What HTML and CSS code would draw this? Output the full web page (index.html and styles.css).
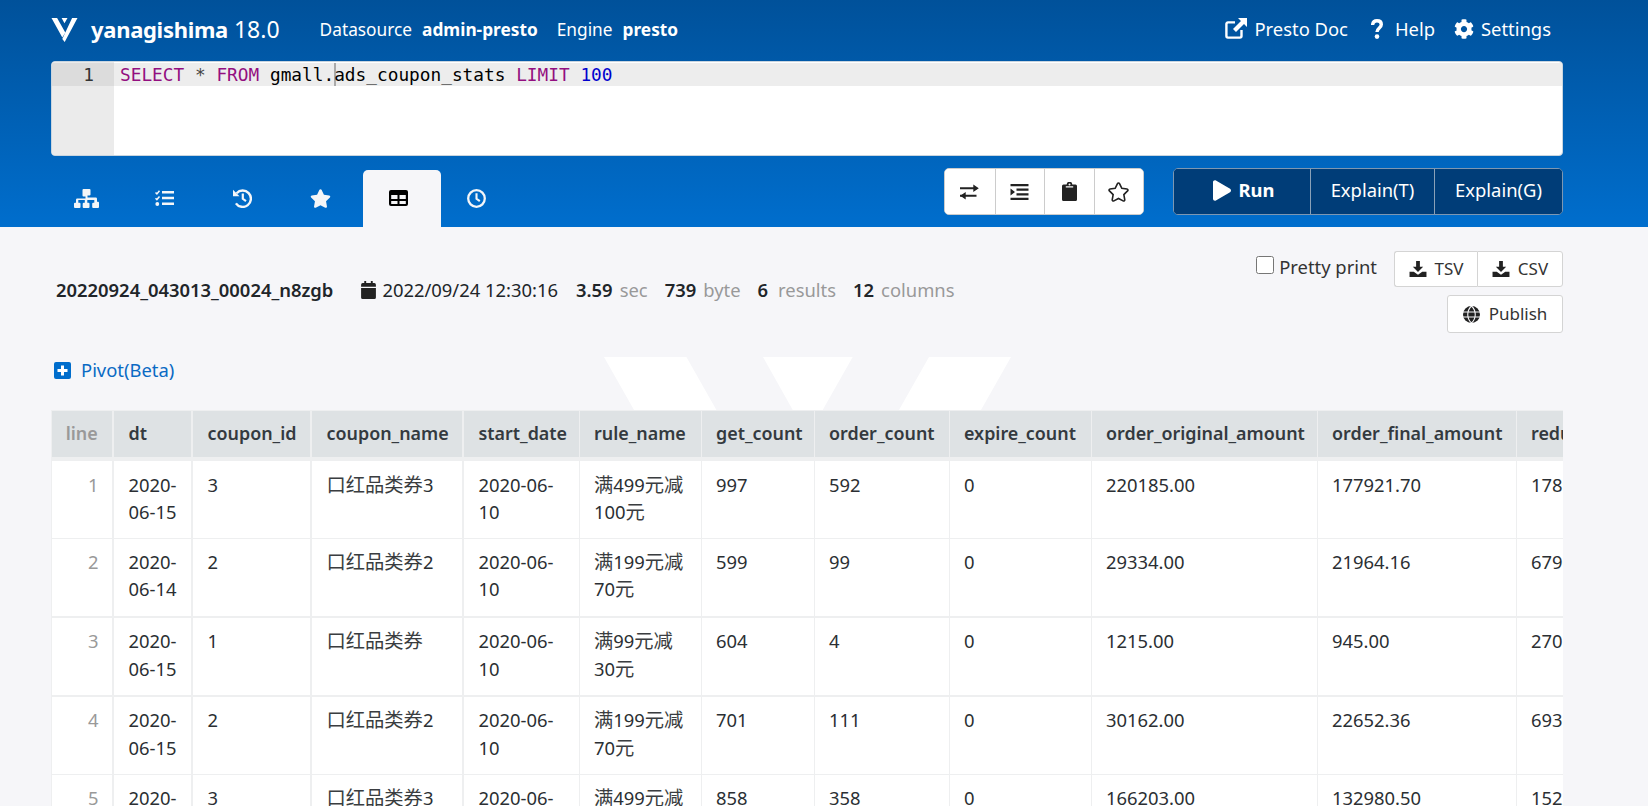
FILE: index.html
```html
<!DOCTYPE html>
<html lang="en">
<head>
<meta charset="utf-8">
<title>yanagishima</title>
<link rel="stylesheet" href="styles.css">
</head>
<body>
<header class="header">
  <nav class="nav">
    <div class="nav-left">
      <svg class="logo" viewBox="0 0 26 24"><path fill="#fff" d="M0 0h5.600L13.800 14.500 10.800 19.500zM10.100 0h5.900L13 5.200zM20.600 0H26L13.200 24 10.800 21z"/></svg>
      <span class="brand">yanagishima</span>
      <span class="version">18.0</span>
      <span class="nav-label">Datasource</span><strong class="nav-value">admin-presto</strong>
      <span class="nav-label eng">Engine</span><strong class="nav-value">presto</strong>
    </div>
    <div class="nav-right">
      <a class="nav-link"><svg class="ic-ext" viewBox="0 0 22 21"><path fill="none" stroke="#fff" stroke-width="2.4" d="M16.5 12v6a1.6 1.6 0 0 1-1.6 1.6H3A1.6 1.6 0 0 1 1.4 18V6A1.6 1.6 0 0 1 3 4.4h7"/><path fill="#fff" d="M13 0h9v9l-3-3-8 8-3-3 8-8z"/></svg>Presto Doc</a>
      <a class="nav-link nav-link-help"><svg class="ic-q" viewBox="0 0 12 20"><path fill="none" stroke="#fff" stroke-width="3.4" d="M1.6 6C1.8 3.2 3.6 1.8 6 1.8c2.600 0 4.300 1.500 4.300 3.700 0 3.500-4.300 3.400-4.300 7.500"/><circle cx="6" cy="17.600" r="2.300" fill="#fff"/></svg>Help</a>
      <a class="nav-link nav-link-tight"><svg class="ic-cog" viewBox="0 0 512 512"><path fill="#fff" d="M487.4 315.7l-42.6-24.6c4.3-23.2 4.3-47 0-70.2l42.6-24.6c4.9-2.8 7.1-8.6 5.5-14-11.1-35.6-30-67.8-54.7-94.6-3.8-4.1-10-5.1-14.8-2.3L380.8 110c-17.9-15.4-38.5-27.3-60.8-35.1V25.8c0-5.6-3.9-10.5-9.4-11.7-36.7-8.2-74.3-7.8-109.2 0-5.5 1.2-9.4 6.1-9.4 11.7V75c-22.2 7.9-42.8 19.8-60.8 35.1L88.7 85.5c-4.9-2.8-11-1.9-14.8 2.3-24.7 26.7-43.6 58.9-54.7 94.6-1.7 5.4.6 11.2 5.5 14L67.3 221c-4.3 23.2-4.3 47 0 70.2l-42.6 24.6c-4.9 2.8-7.1 8.6-5.5 14 11.1 35.6 30 67.8 54.7 94.6 3.8 4.1 10 5.1 14.8 2.3l42.6-24.6c17.9 15.4 38.5 27.3 60.8 35.1v49.2c0 5.6 3.9 10.5 9.4 11.7 36.7 8.2 74.3 7.8 109.2 0 5.5-1.2 9.4-6.1 9.4-11.7v-49.2c22.2-7.9 42.8-19.8 60.8-35.1l42.6 24.6c4.9 2.8 11 1.9 14.8-2.3 24.7-26.7 43.6-58.9 54.7-94.6 1.5-5.5-.7-11.3-5.6-14.1zM256 336c-44.1 0-80-35.9-80-80s35.9-80 80-80 80 35.9 80 80-35.9 80-80 80z"/></svg>Settings</a>
    </div>
  </nav>
  <div class="editor">
    <div class="gutter"><div class="gutter-active">1</div></div>
    <div class="code">
      <div class="code-line"><span class="kw">SELECT</span> <span class="op">*</span> <span class="kw">FROM</span> gmall.<span class="cursor"></span>ads_coupon_stats <span class="kw">LIMIT</span> <span class="num">100</span></div>
    </div>
  </div>
  <div class="toolbar">
    <div class="tabs">
      <a class="tab"><svg class="ic-sitemap" viewBox="0 0 25 19"><path fill="#f4f6f8" d="M9.500 0h6a1 1 0 0 1 1 1v4.500a1 1 0 0 1-1 1h-2v2h8.200a1.300 1.300 0 0 1 1.300 1.300v3h1a1 1 0 0 1 1 1V18a1 1 0 0 1-1 1h-4.800a1 1 0 0 1-1-1v-3.200a1 1 0 0 1 1-1h1.100v-2.700h-7v2.700h1.200a1 1 0 0 1 1 1V18a1 1 0 0 1-1 1h-4.800a1 1 0 0 1-1-1v-3.200a1 1 0 0 1 1-1h1.100v-2.700H4.300v2.700h1.200a1 1 0 0 1 1 1V18a1 1 0 0 1-1 1H1a1 1 0 0 1-1-1v-3.200a1 1 0 0 1 1-1h1v-3a1.300 1.300 0 0 1 1.300-1.300h8.200v-2h-2a1 1 0 0 1-1-1V1a1 1 0 0 1 1-1z"/></svg></a>
      <a class="tab"><svg class="ic-tasks" viewBox="0 0 19 16"><path fill="none" stroke="#f4f6f8" stroke-width="1.500" d="M.5 2.500l1.400 1.400L4.500.8M.5 8.200l1.400 1.400 2.600-3.100"/><circle cx="2.300" cy="14" r="1.900" fill="#f4f6f8"/><path fill="none" stroke="#f4f6f8" stroke-width="2.600" d="M7 2.200h12M7 8h12M7 13.800h12"/></svg></a>
      <a class="tab"><svg class="ic-round" viewBox="0 0 19 19"><path fill="none" stroke="#f4f6f8" stroke-width="2.400" d="M3.600 4.200A8.200 8.200 0 1 1 2.900 14.300"/><path fill="#f4f6f8" d="M0 .8l6.500 6.500H0z"/><path fill="none" stroke="#f4f6f8" stroke-width="2.200" d="M9.800 4.600v5.200l3.200 2.300"/></svg></a>
      <a class="tab"><svg class="ic-star" viewBox="0 0 576 512"><path fill="#f4f6f8" d="M259.3 17.800L194 150.200 47.900 171.500c-26.200 3.800-36.700 36.100-17.700 54.600l105.700 103-25 145.500c-4.500 26.300 23.200 46 46.400 33.700L288 439.600l130.700 68.700c23.200 12.200 50.900-7.400 46.400-33.700l-25-145.500 105.700-103c19-18.500 8.500-50.800-17.700-54.600L382 150.200 316.700 17.800c-11.700-23.600-45.600-23.900-57.400 0z"/></svg></a>
      <a class="tab tab-active"><svg class="ic-table" viewBox="0 0 19 16"><rect width="19" height="16" rx="2" fill="#000"/><path fill="#f6f6f8" d="M2.200 5h6.300v4H2.200zM10.500 5h6.300v4h-6.300zM2.200 11h6.300v3H2.200zM10.500 11h6.300v3h-6.300z"/></svg></a>
      <a class="tab"><svg class="ic-round" viewBox="0 0 19 19"><circle cx="9.500" cy="9.500" r="8.300" fill="none" stroke="#f4f6f8" stroke-width="2.300"/><path fill="none" stroke="#f4f6f8" stroke-width="2.100" d="M9.500 4.300v5.500l3.300 2.400"/></svg></a>
    </div>
    <div class="actions">
      <div class="tool-group">
        <button class="tool"><svg class="ic-tool" viewBox="0 0 19 16"><path fill="none" stroke="#222" stroke-width="2" d="M0 4.300h16.500M0 11.700h16.500"/><path fill="#222" d="M13.300.5L18.800 4.300l-5.500 3.800zM5.700 7.900L.2 11.700l5.500 3.800z"/></svg></button>
        <button class="tool"><svg class="ic-tool" viewBox="0 0 18 16"><path fill="#222" d="M0 0h18v2.300H0zM6 4.500h12v2.200H6zM6 9.200h12v2.200H6zM0 13.700h18V16H0zM0 4.500l4.500 3.500L0 11.500z"/></svg></button>
        <button class="tool"><svg class="ic-clip" viewBox="0 0 15 19"><path fill="#222" d="M1.500 2.500H4.700a2.800 2.800 0 0 1 5.600 0h3.200a1.500 1.500 0 0 1 1.500 1.500v13.500a1.500 1.500 0 0 1-1.500 1.500h-12A1.500 1.500 0 0 1 0 17.500V4a1.500 1.500 0 0 1 1.500-1.500z"/><path fill="#fff" d="M3.800 4.300h7.400v1.300H3.800z"/><circle cx="7.500" cy="2.400" r="1" fill="#fff"/></svg></button>
        <button class="tool"><svg class="ic-star-o" viewBox="-10 -10 596 532"><path fill="none" stroke="#222" stroke-width="46" d="M259.3 17.800L194 150.200 47.900 171.500c-26.200 3.800-36.700 36.100-17.700 54.600l105.700 103-25 145.500c-4.500 26.300 23.200 46 46.400 33.700L288 439.600l130.700 68.700c23.200 12.200 50.900-7.400 46.400-33.700l-25-145.500 105.700-103c19-18.500 8.500-50.800-17.700-54.600L382 150.200 316.700 17.800c-11.700-23.600-45.600-23.900-57.400 0z"/></svg></button>
      </div>
      <div class="run-group">
        <button class="run run-main"><svg class="ic-play" viewBox="0 0 448 512"><path fill="#fff" d="M424.400 214.700L72.400 6.600C43.800-10.300 0 6.100 0 47.900V464c0 37.500 40.700 60.100 72.400 41.300l352-208c31.400-18.500 31.500-64.100 0-82.600z"/></svg>Run</button>
        <button class="run run-t">Explain(T)</button>
        <button class="run run-g">Explain(G)</button>
      </div>
    </div>
  </div>
</header>
<main class="main">
  <svg class="watermark" viewBox="0 0 420 60"><path fill="#fff" d="M0 0h82.400l34 60H34zM159 0h89.700l-34 60h-22zM325 0h82l-34 60h-82z"/></svg>
  <section class="meta">
    <div class="meta-left">
      <strong class="query-id">20220924_043013_00024_n8zgb</strong>
      <svg class="ic-cal" viewBox="0 0 14 17"><path fill="#222" d="M3 0h1.800v2h4.400V0H11v2h1.500A1.500 1.500 0 0 1 14 3.500V5.500H0V3.500A1.500 1.500 0 0 1 1.500 2H3zM0 6.500h14v9A1.500 1.500 0 0 1 12.500 17h-11A1.500 1.500 0 0 1 0 15.500z"/></svg>
      <span class="date">2022/09/24 12:30:16</span>
      <strong class="stat">3.59</strong><span class="unit">sec</span>
      <strong class="stat">739</strong><span class="unit">byte</span>
      <strong class="stat stat-wide">6</strong><span class="unit">results</span>
      <strong class="stat">12</strong><span class="unit">columns</span>
    </div>
    <div class="meta-right">
      <div class="export-row">
        <label class="pretty"><input type="checkbox" class="check">Pretty print</label>
        <div class="btn-group">
          <button class="btn"><svg class="ic-dl" viewBox="0 0 18 17"><path fill="#222" d="M7 0h4v6h3.500L9 11.800 3.500 6H7zM0 11.500h4.500L9 14.500l4.500-3H18V17H0z"/></svg>TSV</button>
          <button class="btn"><svg class="ic-dl" viewBox="0 0 18 17"><path fill="#222" d="M7 0h4v6h3.500L9 11.800 3.500 6H7zM0 11.500h4.500L9 14.500l4.500-3H18V17H0z"/></svg>CSV</button>
        </div>
      </div>
      <button class="btn btn-solo"><svg class="ic-globe" viewBox="0 0 17 17"><circle cx="8.500" cy="8.500" r="8.500" fill="#222"/><path fill="none" stroke="#f6f6f8" stroke-width="1.100" d="M0 6h17M0 11h17M8.500 0c-5 4.500-5 12.500 0 17M8.500 0c5 4.500 5 12.500 0 17"/></svg>Publish</button>
    </div>
  </section>
  <div class="pivot"><svg class="ic-plus" viewBox="0 0 17 17"><rect width="17" height="17" rx="2" fill="#006dcc"/><path fill="#fff" d="M7 3.500h3V7h3.500v3H10v3.500H7V10H3.500V7H7z"/></svg><a class="pivot-link">Pivot(Beta)</a></div>
  <div class="table-wrap">
    <table class="grid">
      <colgroup>
        <col class="w61"><col class="w79"><col class="w119"><col class="w152"><col class="w117"><col class="w122"><col class="w113"><col class="w135"><col class="w142"><col class="w226"><col class="w199"><col class="w200">
      </colgroup>
      <thead>
        <tr><th class="line">line</th><th>dt</th><th>coupon_id</th><th>coupon_name</th><th>start_date</th><th>rule_name</th><th>get_count</th><th>order_count</th><th>expire_count</th><th>order_original_amount</th><th>order_final_amount</th><th>reduce_amount</th></tr>
      </thead>
      <tbody>
        <tr><td class="line">1</td><td>2020-06-15</td><td>3</td><td><span class="cn">口红品类券</span>3</td><td>2020-06-10</td><td><span class="cn">满</span>499<span class="cn">元减</span>100<span class="cn">元</span></td><td>997</td><td>592</td><td>0</td><td>220185.00</td><td>177921.70</td><td>17892.30</td></tr>
        <tr><td class="line">2</td><td>2020-06-14</td><td>2</td><td><span class="cn">口红品类券</span>2</td><td>2020-06-10</td><td><span class="cn">满</span>199<span class="cn">元减</span>70<span class="cn">元</span></td><td>599</td><td>99</td><td>0</td><td>29334.00</td><td>21964.16</td><td>6790.00</td></tr>
        <tr><td class="line">3</td><td>2020-06-15</td><td>1</td><td><span class="cn">口红品类券</span></td><td>2020-06-10</td><td><span class="cn">满</span>99<span class="cn">元减</span>30<span class="cn">元</span></td><td>604</td><td>4</td><td>0</td><td>1215.00</td><td>945.00</td><td>270.00</td></tr>
        <tr><td class="line">4</td><td>2020-06-15</td><td>2</td><td><span class="cn">口红品类券</span>2</td><td>2020-06-10</td><td><span class="cn">满</span>199<span class="cn">元减</span>70<span class="cn">元</span></td><td>701</td><td>111</td><td>0</td><td>30162.00</td><td>22652.36</td><td>6930.00</td></tr>
        <tr><td class="line">5</td><td>2020-06-15</td><td>3</td><td><span class="cn">口红品类券</span>3</td><td>2020-06-10</td><td><span class="cn">满</span>499<span class="cn">元减</span>100<span class="cn">元</span></td><td>858</td><td>358</td><td>0</td><td>166203.00</td><td>132980.50</td><td>15222.50</td></tr>
      </tbody>
    </table>
  </div>
</main>
</body>
</html>
```
FILE: styles.css
```css
* { box-sizing: border-box; }
html, body { margin: 0; height: 100%; overflow: hidden; }
body {
  background: #f6f6f9;
  color: #212529;
  font-family: "Noto Sans", "Noto Sans CJK SC", sans-serif;
  font-size: 18.4px;
  line-height: 27.6px;
}
svg { display: block; flex: none; }
button { font: inherit; cursor: pointer; }

.header {
  height: 227px;
  padding: 0 85px 0 51px;
  background: linear-gradient(#00519a, #006ecd);
  color: #fff;
}
.nav { height: 61px; display: flex; justify-content: space-between; align-items: center; padding-bottom: 2px; }
.nav-left, .nav-right { display: flex; align-items: center; }
.logo { width: 27px; height: 24px; margin-right: 13px; }
.brand { font-size: 22px; font-weight: 700; letter-spacing: -0.3px; }
.version { font-size: 23px; margin-left: 6px; margin-right: 40px; }
.nav-label { font-size: 17.3px; }
.nav-label.eng { margin-left: 19px; }
.nav-value { font-size: 17.3px; font-weight: 700; margin-left: 10px; }
.nav-right { padding-right: 12px; margin-top: -2px; }
.nav-link { display: flex; align-items: center; margin-left: 24px; }
.nav-link-help { margin-left: 23px; }
.nav-link-tight { margin-left: 19px; }
.ic-ext { width: 22px; height: 21px; margin-right: 7px; }
.ic-q { width: 12px; height: 20px; margin-right: 12px; }
.ic-cog { width: 20px; height: 20px; margin-right: 7px; }

.editor {
  height: 95px;
  display: flex;
  background: #fff;
  border: 1px solid #c9d5df;
  border-radius: 4px;
  overflow: hidden;
  font-family: "DejaVu Sans Mono", monospace;
  font-size: 17.8px;
  line-height: 23px;
}
.gutter { width: 62px; background: #ebebeb; padding-top: 1px; }
.gutter-active { height: 23px; background: #dcdcdc; text-align: right; padding-right: 20px; color: #333; }
.code { flex: 1; padding-top: 1px; }
.code-line { height: 23px; background: #ededed; padding-left: 6px; color: #000; white-space: pre; }
.kw { color: #930f80; }
.op { color: #444; }
.num { color: #0000cd; }
.cursor { display: inline-block; width: 2px; height: 23px; margin: 0 -2px 0 0; background: #aaa; vertical-align: top; }

.toolbar { display: flex; justify-content: space-between; padding-top: 12px; }
.tabs { display: flex; padding-top: 2px; }
.tab { width: 78px; height: 57px; display: flex; align-items: center; justify-content: center; padding-right: 7px; padding-bottom: 1px; border-radius: 5px 5px 0 0; }
.tab-active { background: #f6f6f9; }
.ic-sitemap { width: 25px; height: 19px; }
.ic-tasks, .ic-table { width: 19px; height: 16px; }
.ic-round { width: 19px; height: 19px; }
.ic-star { width: 21px; height: 19px; }

.actions { display: flex; gap: 29px; align-items: flex-start; }
.tool-group { display: flex; height: 47px; border: 1px solid #ccc; border-radius: 5px; background: #fff; overflow: hidden; }
.tool { width: 49.500px; height: 100%; padding: 0; background: #fff; border: 0; border-left: 1px solid #ccc; display: flex; align-items: center; justify-content: center; }
.tool:first-child { border-left: 0; }
.ic-tool { width: 19px; height: 16px; }
.ic-clip { width: 15px; height: 19px; }
.ic-star-o { width: 21px; height: 20px; }
.run-group { display: flex; height: 47px; border: 1px solid #7d97b2; border-radius: 5px; background: #003d78; overflow: hidden; }
.run { height: 100%; padding: 0 0 3px; color: #fff; background: #003d78; border: 0; border-left: 1px solid #8aa1b8; display: flex; align-items: center; justify-content: center; }
.run-main { width: 136px; border-left: 0; font-weight: 700; padding-left: 3px; }
.run-t { width: 124px; }
.run-g { width: 128px; }
.ic-play { width: 18px; height: 21px; margin-right: 8px; }

.main { position: relative; padding: 24px 85px 0 51px; }
.watermark { position: absolute; left: 604px; top: 129.700px; width: 420px; height: 60px; }
.meta { position: relative; display: flex; justify-content: space-between; align-items: flex-start; height: 81px; }
.meta-left { display: flex; align-items: center; padding: 25px 0 0 5px; }
.query-id { font-weight: 600; margin-right: 28px; }
.ic-cal { width: 15px; height: 18px; margin-right: 6px; }
.date { margin-right: 18px; }
.stat { font-weight: 600; margin-right: 7px; }
.stat-wide { margin-right: 10px; }
.unit { color: #999; margin-right: 17px; }
.meta-right { display: flex; flex-direction: column; align-items: flex-end; gap: 8px; }
.export-row { display: flex; align-items: center; }
.pretty { display: flex; align-items: center; margin-right: 17px; margin-top: -5px; color: #333; }
.check { width: 18px; height: 18px; margin: -3px 5px 0 0; }
.btn-group { display: flex; }
.btn { display: flex; align-items: center; height: 36px; background: #fff; border: 1px solid #d4d4d4; font-size: 17px; color: #333; padding: 0; }
.btn-group .btn { justify-content: center; }
.btn-group .btn:first-child { width: 83px; border-radius: 3px 0 0 3px; border-right: 0; }
.btn-group .btn:last-child { width: 86px; border-radius: 0 3px 3px 0; }
.ic-dl { width: 18px; height: 16px; margin-right: 8px; }
.btn-solo { width: 116px; height: 38px; justify-content: center; border-radius: 3px; }
.ic-globe { width: 17px; height: 17px; margin-right: 9px; }

.pivot { position: relative; display: flex; align-items: center; height: 28px; margin-top: 24px; padding-left: 3px; }
.ic-plus { width: 17px; height: 17px; margin-right: 10px; }
.pivot-link { color: #0a6ac4; }

.table-wrap { position: relative; width: 1512px; margin-top: 26px; overflow: hidden; }
.grid { width: 1665px; table-layout: fixed; border-collapse: collapse; }
.w61 { width: 61px; } .w79 { width: 79px; } .w119 { width: 119px; } .w152 { width: 152px; }
.w117 { width: 117px; } .w122 { width: 122px; } .w113 { width: 113px; } .w135 { width: 135px; }
.w142 { width: 142px; } .w226 { width: 226px; } .w199 { width: 199px; } .w200 { width: 200px; }
.grid th, .grid td { text-align: left; vertical-align: top; border: 1px solid #eeeff0; padding: 9px 14px 13px; overflow: hidden; }
.grid th { background: #dee2e4; font-size: 17.900px; font-weight: 600; padding-top: 9px; padding-bottom: 9px; border-bottom-width: 4px; white-space: nowrap; color: #343a3f; }
.grid td { background: #fff; color: #2b2f33; }
.grid th:nth-child(-n+5), .grid td:nth-child(-n+5) { padding-left: 15px; }
.grid tbody tr:first-child td { padding-top: 10px; padding-bottom: 12px; }
.cn { font-size: 19.300px; color: #3a3d40; }
.grid td:nth-child(-n+4) { border-right-width: 2px; }
.grid th:nth-child(-n+4) { border-right-width: 2px; }
.grid tbody tr:nth-child(2) td, .grid tbody tr:nth-child(3) td { border-bottom-width: 2px; }
.grid th.line { color: #999; text-align: center; padding-left: 0; padding-right: 0; }
.grid td.line { color: #999; text-align: right; padding-left: 0; padding-right: 13px; }
```
